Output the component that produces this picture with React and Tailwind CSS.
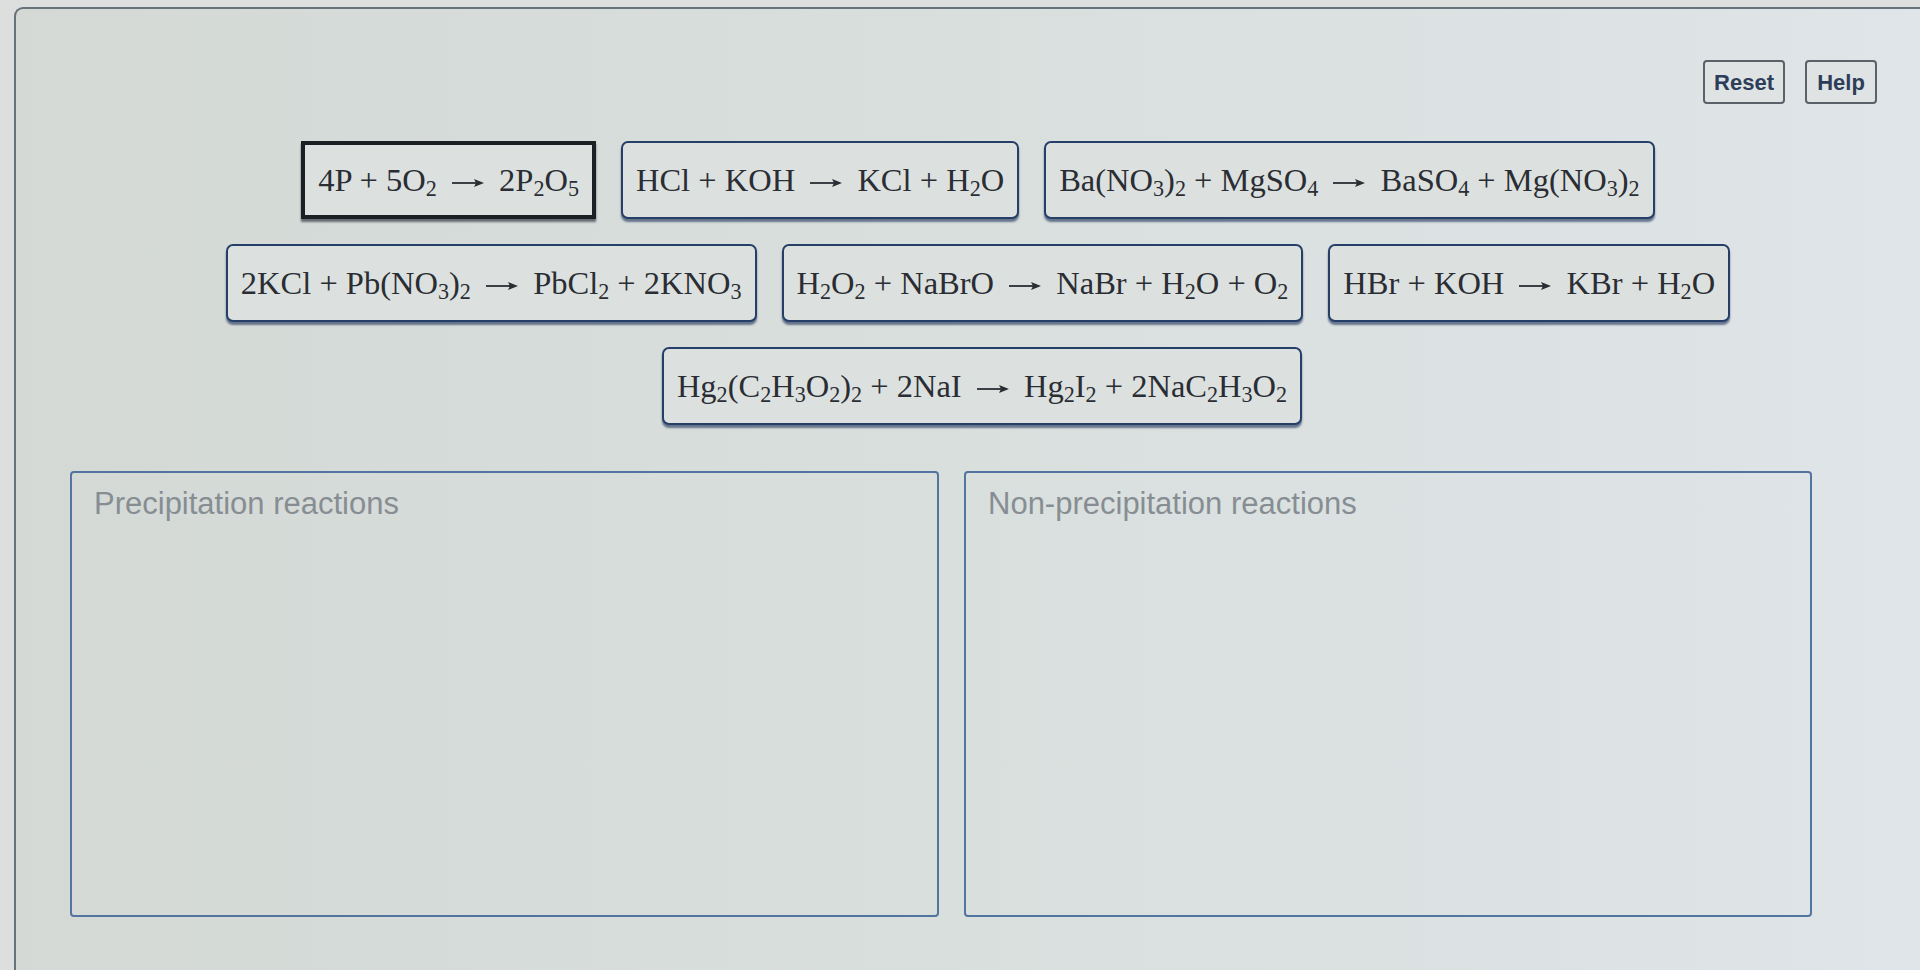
import React from "react";

const Arrow = () => (
  <svg width="32" height="12" viewBox="0 0 32 12" className="inline-block mx-[7px] align-middle">
    <line x1="0" y1="6" x2="24" y2="6" stroke="#2a2d33" strokeWidth="1.8" />
    <path d="M22 2 L32 6 L22 10 L24 6 Z" fill="#2a2d33" />
  </svg>
);

const S = ({ children }) => <sub className="text-[0.68em]">{children}</sub>;

const Eq = ({ left, right, selected }) => (
  <div
    className={
      selected
        ? "h-[78px] flex items-center px-[13px] border-[4px] border-[#1c1f24] bg-[#dce1df] shadow-[0_3px_2px_rgba(10,15,25,0.55)]"
        : "h-[78px] flex items-center px-[13px] border-2 border-[#253f68] rounded-[7px] bg-[#dce1df] shadow-[0_3px_2px_rgba(25,45,85,0.6)]"
    }
  >
    <span className="text-[32.5px] text-[#2a2d33] whitespace-nowrap leading-none" style={{ fontFamily: '"Liberation Serif", "Times New Roman", serif' }}>
      {left} <Arrow /> {right}
    </span>
  </div>
);

const Btn = ({ children, w }) => (
  <button
    className={`${w} h-[44px] border-2 border-[#5b6168] rounded-[4px] bg-[#dfe3e3] text-[22px] font-bold text-[#2d3d5a]`}
    style={{ fontFamily: '"Liberation Sans", Arial, sans-serif' }}
  >
    {children}
  </button>
);

const DropZone = ({ label, w }) => (
  <div className={`${w} h-[446px] border-2 border-[#5275a0] rounded-[4px] px-[22px] pt-[8px]`}>
    <span className="text-[31px] text-[#878e93]" style={{ fontFamily: '"Liberation Sans", Arial, sans-serif' }}>
      {label}
    </span>
  </div>
);

export default function App() {
  return (
    <div className="w-full h-[970px] bg-[#dcdfde] overflow-hidden pl-[14px] pt-[7px]">
      <div className="h-[1000px] border-l-2 border-t-2 border-[#67727b] rounded-tl-[9px] bg-gradient-to-r from-[#d4d9d6] via-[#d9dfdd] to-[#dfe5e8]">
        <div className="flex justify-end gap-[20px] pr-[43px] pt-[51px]">
          <Btn w="w-[82px]">Reset</Btn>
          <Btn w="w-[72px]">Help</Btn>
        </div>

        <div className="flex flex-col items-center gap-[25px] pt-[37px] pl-[20px]">
          <div className="flex gap-[25px]">
            <Eq selected left={<>4P + 5O<S>2</S></>} right={<>2P<S>2</S>O<S>5</S></>} />
            <Eq left={<>HCl + KOH</>} right={<>KCl + H<S>2</S>O</>} />
            <Eq left={<>Ba(NO<S>3</S>)<S>2</S> + MgSO<S>4</S></>} right={<>BaSO<S>4</S> + Mg(NO<S>3</S>)<S>2</S></>} />
          </div>
          <div className="flex gap-[25px]">
            <Eq left={<>2KCl + Pb(NO<S>3</S>)<S>2</S></>} right={<>PbCl<S>2</S> + 2KNO<S>3</S></>} />
            <Eq left={<>H<S>2</S>O<S>2</S> + NaBrO</>} right={<>NaBr + H<S>2</S>O + O<S>2</S></>} />
            <Eq left={<>HBr + KOH</>} right={<>KBr + H<S>2</S>O</>} />
          </div>
          <div className="flex gap-[25px] pl-[8px]">
            <Eq left={<>Hg<S>2</S>(C<S>2</S>H<S>3</S>O<S>2</S>)<S>2</S> + 2NaI</>} right={<>Hg<S>2</S>I<S>2</S> + 2NaC<S>2</S>H<S>3</S>O<S>2</S></>} />
          </div>
        </div>

        <div className="flex gap-[25px] pl-[54px] pt-[46px]">
          <DropZone w="w-[869px]" label="Precipitation reactions" />
          <DropZone w="w-[848px]" label="Non-precipitation reactions" />
        </div>
      </div>
    </div>
  );
}
